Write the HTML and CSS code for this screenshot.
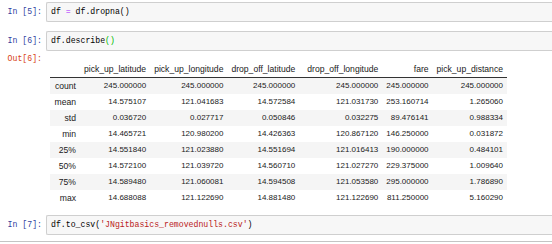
FILE: index.html
```html
<!DOCTYPE html>
<html>
  <head>
    <meta charset="utf-8">
    <title>describe</title>
    <link rel="stylesheet" href="styles.css">
  </head>
  <body>
    <div class="notebook">
      <div class="cell first">
        <div class="prompt in">In [5]:</div>
        <div class="input">df <span class="op">=</span> df.dropna()</div>
      </div>
      <div class="cell">
        <div class="prompt in">In [6]:</div>
        <div class="input">df.describe<span class="br">()</span></div>
      </div>
      <div class="output">
        <div class="prompt out">Out[6]:</div>
        <table class="dataframe">
          <thead>
            <tr>
              <th class="idx"></th>
              <th class="c1">pick_up_latitude</th>
              <th class="c2">pick_up_longitude</th>
              <th class="c3">drop_off_latitude</th>
              <th class="c4">drop_off_longitude</th>
              <th class="c5">fare</th>
              <th class="c6">pick_up_distance</th>
            </tr>
          </thead>
          <tbody>
            <tr><th>count</th><td>245.000000</td><td>245.000000</td><td>245.000000</td><td>245.000000</td><td>245.000000</td><td>245.000000</td></tr>
            <tr><th>mean</th><td>14.575107</td><td>121.041683</td><td>14.572584</td><td>121.031730</td><td>253.160714</td><td>1.265060</td></tr>
            <tr><th>std</th><td>0.036720</td><td>0.027717</td><td>0.050846</td><td>0.032275</td><td>89.476141</td><td>0.988334</td></tr>
            <tr><th>min</th><td>14.465721</td><td>120.980200</td><td>14.426363</td><td>120.867120</td><td>146.250000</td><td>0.031872</td></tr>
            <tr><th>25%</th><td>14.551840</td><td>121.023880</td><td>14.551694</td><td>121.016413</td><td>190.000000</td><td>0.484101</td></tr>
            <tr><th>50%</th><td>14.572100</td><td>121.039720</td><td>14.560710</td><td>121.027270</td><td>229.375000</td><td>1.009640</td></tr>
            <tr><th>75%</th><td>14.589480</td><td>121.060081</td><td>14.594508</td><td>121.053580</td><td>295.000000</td><td>1.786890</td></tr>
            <tr><th>max</th><td>14.688088</td><td>121.122690</td><td>14.881480</td><td>121.122690</td><td>811.250000</td><td>5.160290</td></tr>
          </tbody>
        </table>
      </div>
      <div class="cell">
        <div class="prompt in">In [7]:</div>
        <div class="input">df.to_csv(<span class="str">'JNgitbasics_removednulls.csv'</span>)</div>
      </div>
      <div class="divider"></div>
    </div>
  </body>
</html>
```

FILE: styles.css
```css
  html, body{
    margin: 0;
    padding: 0;
    background: #fff;
    overflow: hidden;
  }
  .cell{
    display: flex;
    margin-top: 9px;
  }
  .cell.first{
    margin-top: 2px;
  }
  .prompt{
    width: 46px;
    flex: none;
    box-sizing: border-box;
    padding-right: 4px;
    text-align: right;
    font-family: "Liberation Mono", "DejaVu Sans Mono", monospace;
    font-size: 8.2px;
    line-height: 20px;
  }
  .prompt.in{
    color: #303f9f;
  }
  .prompt.out{
    color: #d84315;
    line-height: 12px;
    margin-top: 2px;
  }
  /* box runs on past the right edge of the shot, so no right border */
  .input{
    flex: 1;
    height: 20px;
    box-sizing: border-box;
    background: #f7f7f7;
    border: 1px solid #cfcfcf;
    border-right: none;
    border-radius: 2px 0 0 2px;
    padding: 0 4px;
    font-family: "Liberation Mono", "DejaVu Sans Mono", monospace;
    font-size: 8.2px;
    line-height: 18px;
    color: #000;
    white-space: pre;
  }
  .op{ color: #aa22ff; }
  .br{ color: #00bb00; }
  .str{ color: #ba2121; }

  .output{
    display: flex;
  }
  .dataframe{
    margin-top: 10px;
    margin-left: 4px;
    border-collapse: collapse;
    font-family: "Liberation Sans", Arial, sans-serif;
    color: #1a1a1a;
    table-layout: fixed;
  }
  .dataframe th, .dataframe td{
    padding: 0 4px;
    height: 16px;
    text-align: right;
    font-weight: normal;
    white-space: nowrap;
    box-sizing: border-box;
  }
  .dataframe th{
    font-size: 8.6px;
  }
  .dataframe td{
    font-size: 8px;
  }
  .dataframe thead th{
    border-bottom: 1px solid #333;
    line-height: 16px;
  }
  .dataframe tbody tr:nth-child(odd){
    background: #f5f5f5;
  }
  .idx{ width: 30px; }
  .c1{ width: 70px; }
  .c2{ width: 77px; }
  .c3{ width: 67px; }
  .c4{ width: 83px; }
  .c5{ width: 50px; }
  .c6{ width: 74px; }

  .divider{
    margin-top: 6px;
    border-top: 1px solid #c4c4c4;
  }
```
